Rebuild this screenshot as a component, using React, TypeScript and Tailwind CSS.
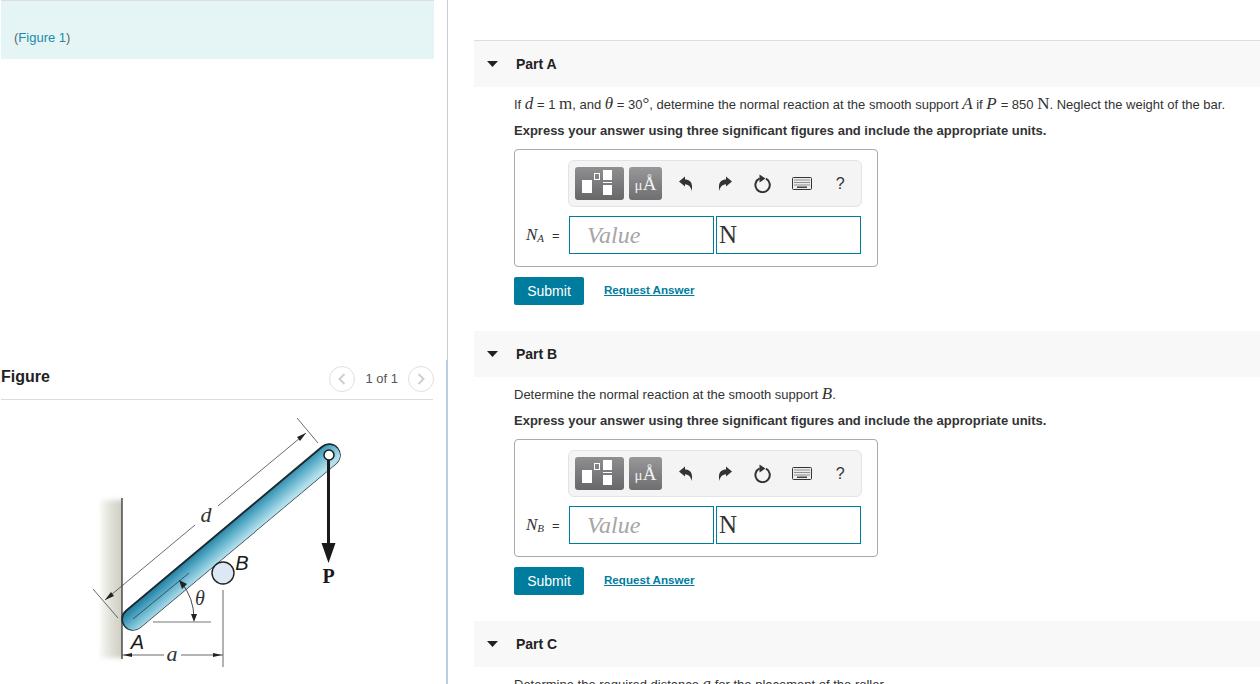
const BAR = "#1d2a30";

const Diagram = () => {
  return (
    <svg width="433" height="284" viewBox="0 0 433 284" className="block">
      <defs>
        <linearGradient id="wall" x1="0" y1="0" x2="1" y2="0">
          <stop offset="0" stopColor="#f4f4f0" />
          <stop offset="0.5" stopColor="#d6d5ca" />
          <stop offset="1" stopColor="#c4c3b6" />
        </linearGradient>
        <linearGradient id="bar" gradientUnits="userSpaceOnUse" x1="223" y1="129" x2="237" y2="145">
          <stop offset="0" stopColor="#2a86a8" />
          <stop offset="0.45" stopColor="#62b2cc" />
          <stop offset="1" stopColor="#b4dfec" />
        </linearGradient>
        <filter id="soft" x="-30%" y="-10%" width="160%" height="120%">
          <feGaussianBlur stdDeviation="2.5" />
        </filter>
        <clipPath id="wallClip">
          <rect x="90" y="90" width="31" height="180" />
        </clipPath>
      </defs>

      {/* wall */}
      <g clipPath="url(#wallClip)">
        <rect x="100" y="100" width="32" height="158" fill="url(#wall)" filter="url(#soft)" />
      </g>
      <line x1="121" y1="98" x2="121" y2="259" stroke="#333" strokeWidth="1.3" />

      {/* bar */}
      <line x1="132" y1="219" x2="328" y2="55" stroke={BAR} strokeWidth="23.5" strokeLinecap="round" />
      <line x1="132.5" y1="219.5" x2="328.5" y2="55.5" stroke="url(#bar)" strokeWidth="21" strokeLinecap="round" />
      <line x1="132" y1="219" x2="188" y2="173" stroke="#2a3c44" strokeWidth="0.8" />

      {/* force P */}
      <line x1="327.5" y1="60" x2="327.5" y2="145" stroke="#1a1a1a" strokeWidth="3" />
      <path d="M320.5 143 L334.5 143 L327.5 163 Z" fill="#1a1a1a" />
      <circle cx="328" cy="55" r="5" fill="#fff" stroke="#1a1a1a" strokeWidth="1.5" />
      <text x="327.5" y="183" textAnchor="middle" fontFamily="Liberation Serif" fontWeight="700" fontSize="20" fill="#1a1a1a">P</text>

      {/* dimension d */}
      <g stroke="#444" strokeWidth="0.8" fill="none">
        <line x1="104" y1="200" x2="194" y2="125" />
        <line x1="217" y1="106" x2="305" y2="33" />
        <line x1="296" y1="18" x2="317" y2="43" />
        <line x1="92" y1="189" x2="117" y2="218" />
      </g>
      <path d="M305 33 L296 37 L299 41 Z" fill="#222" />
      <path d="M104 200 L113 196 L110 192 Z" fill="#222" />
      <text x="205" y="122" textAnchor="middle" fontFamily="Liberation Serif" fontStyle="italic" fontSize="22" fill="#333">d</text>

      {/* roller */}
      <circle cx="222" cy="173" r="11" fill="#dce9f5" stroke="#222" strokeWidth="1.4" />
      <text x="241" y="170" textAnchor="middle" fontFamily="Liberation Sans" fontStyle="italic" fontSize="20" fill="#1a1a1a">B</text>

      {/* angle */}
      <path d="M180 182 Q193 198 193 219" fill="none" stroke="#333" strokeWidth="0.9" />
      <path d="M178 180 L186 184 L181 189 Z" fill="#222" />
      <path d="M193 222 L190 214 L196 214 Z" fill="#222" />
      <line x1="152" y1="222" x2="210" y2="222" stroke="#777" strokeWidth="1.2" />
      <text x="199" y="205" textAnchor="middle" fontFamily="Liberation Serif" fontStyle="italic" fontSize="20" fill="#333">θ</text>

      {/* dimension a */}
      <line x1="222" y1="190" x2="222" y2="267" stroke="#666" strokeWidth="1" />
      <line x1="121" y1="255" x2="163" y2="255" stroke="#444" strokeWidth="0.8" />
      <line x1="180" y1="255" x2="222" y2="255" stroke="#444" strokeWidth="0.8" />
      <path d="M122 255 L131 253 L131 257 Z" fill="#222" />
      <path d="M221 255 L212 253 L212 257 Z" fill="#222" />
      <text x="171" y="261" textAnchor="middle" fontFamily="Liberation Serif" fontStyle="italic" fontSize="22" fill="#333">a</text>
      <text x="136.5" y="249" textAnchor="middle" fontFamily="Liberation Sans" fontStyle="italic" fontSize="20" fill="#1a1a1a">A</text>
    </svg>
  );
};

const M = ({ children, italic }: { children: React.ReactNode; italic?: boolean }) => (
  <span className={`font-['Liberation_Serif',serif] text-[17px] leading-[1] text-[#333] ${italic ? "italic" : ""}`}>{children}</span>
);

const ToolIcon = ({ children }: { children: React.ReactNode }) => (
  <div className="w-[38.5px] flex items-center justify-center">{children}</div>
);

const AnswerBox = ({ sub }: { sub: string }) => {
  return (
    <div className="w-[364px] h-[118px] border border-[#aaaaaa] rounded-[4px] pt-[10px] bg-white">
      <div className="ml-[53px] w-[294px] h-[47px] bg-[#f4f4f4] border border-[#e3e3e3] rounded-[6px] flex items-center pl-[6px]">
        <div className="w-[49px] h-[33px] rounded-[3px] bg-gradient-to-b from-[#8f8f92] to-[#67676a]">
          <svg width="49" height="33" viewBox="0 0 49 33">
            <rect x="7" y="13" width="10" height="13" fill="#fff" />
            <rect x="19.5" y="6.5" width="5" height="6" fill="none" stroke="#fff" strokeWidth="1" />
            <rect x="28" y="3" width="9" height="10" fill="#fff" />
            <rect x="28" y="15" width="9" height="1" fill="#fff" />
            <rect x="28" y="18" width="9" height="10" fill="#fff" />
          </svg>
        </div>
        <div className="ml-[5px] w-[33px] h-[33px] rounded-[3px] bg-gradient-to-b from-[#98989b] to-[#6f6f72] flex items-baseline justify-center font-['Liberation_Serif',serif] text-[#f2f2f2] pt-[7px]">
          <span className="text-[15px] leading-[20px]">μ</span>
          <span className="text-[19px] leading-[20px]">Å</span>
        </div>
        <div className="ml-[5px] flex items-center">
          <ToolIcon>
            <svg width="14" height="15" viewBox="0 0 14 15">
              <path d="M0 5.5 L6 0.5 V3.4 C11 3.4 14.5 7 12.5 15 C12 11 10 8.5 6 8.2 V10.5 Z" fill="#333" />
            </svg>
          </ToolIcon>
          <ToolIcon>
            <svg width="14" height="15" viewBox="0 0 14 15">
              <path d="M14 5.5 L8 0.5 V3.4 C3 3.4 -0.5 7 1.5 15 C2 11 4 8.5 8 8.2 V10.5 Z" fill="#333" />
            </svg>
          </ToolIcon>
          <ToolIcon>
            <svg width="18" height="19" viewBox="0 0 18 19">
              <path d="M12 4.6 A7.2 7.2 0 1 1 5.6 4.4" fill="none" stroke="#333" strokeWidth="2" />
              <path d="M5.5 0.5 L11.5 4.5 L5.5 8.5 Z" fill="#333" />
            </svg>
          </ToolIcon>
          <ToolIcon>
            <svg width="20" height="13" viewBox="0 0 20 13">
              <rect x="0.5" y="0.5" width="19" height="12" rx="1" fill="#ececec" stroke="#333" />
              <path d="M2.5 3 H17.5 M2.5 5.5 H17.5 M2.5 8 H17.5" stroke="#333" strokeWidth="1" strokeDasharray="1 1" />
              <rect x="5" y="9.5" width="10" height="1.5" fill="#444" />
            </svg>
          </ToolIcon>
          <ToolIcon>
            <span className="text-[16px] text-[#333]">?</span>
          </ToolIcon>
        </div>
      </div>
      <div className="mt-[9px] flex items-center">
        <div className="w-[54px] pl-[11px] flex items-baseline text-[#333]">
          <span className="font-['Liberation_Serif',serif] italic text-[17px]">N</span>
          <span className="font-['Liberation_Serif',serif] italic text-[11px] translate-y-[2px]">{sub}</span>
          <span className="text-[13px] ml-[8px]">=</span>
        </div>
        <div className="w-[145px] h-[38px] border border-[#007c9e] flex items-center pl-[17px] font-['Liberation_Serif',serif] italic text-[24px] text-[#a6a6a6]">
          Value
        </div>
        <div className="ml-[2px] w-[145px] h-[38px] border border-[#007c9e] flex items-center pl-[2px] font-['Liberation_Serif',serif] text-[25px] text-[#333]">
          N
        </div>
      </div>
    </div>
  );
};

const PartHeader = ({ title }: { title: string }) => (
  <div className="h-[46px] bg-[#f8f8f8] flex items-center pl-[13px]">
    <svg width="11" height="6" viewBox="0 0 11 6">
      <path d="M0 0 H11 L5.5 6 Z" fill="#222" />
    </svg>
    <span className="ml-[18px] text-[14px] font-bold text-[#222]">{title}</span>
  </div>
);

const Part = ({ title, sub, children }: { title: string; sub: string; children: React.ReactNode }) => {
  return (
    <div className="h-[290px]">
      <PartHeader title={title} />
      <div className="pl-[40px]">
        <p className="mt-[8px] h-[20px] leading-[20px] text-[13px] text-[#333] whitespace-nowrap">{children}</p>
        <p className="mt-[6px] h-[20px] leading-[20px] text-[13px] font-bold text-[#333] whitespace-nowrap">
          Express your answer using three significant figures and include the appropriate units.
        </p>
        <div className="mt-[8px]">
          <AnswerBox sub={sub} />
        </div>
        <div className="mt-[10px] flex items-center">
          <button className="w-[70px] h-[28px] bg-[#007c9e] rounded-[2px] text-white text-[14px]">Submit</button>
          <a className="ml-[20px] -mt-[3px] text-[11.6px] font-bold text-[#007c9e] underline">Request Answer</a>
        </div>
      </div>
    </div>
  );
};

export default function App() {
  return (
    <div className="w-[1260px] h-[684px] overflow-hidden flex bg-white font-['Liberation_Sans',Arial,sans-serif]">
      <div className="w-[448px] shrink-0">
        <div className="h-[360px] border-r border-[#c9ccd1] pl-[1px] pr-[13px]">
          <div className="h-[59px] bg-[#e5f5f6] border-t border-[#dddddd] pl-[13px] pt-[29px] text-[13px] leading-[16px] text-[#666]">
            (<span className="text-[#1e8aa8]">Figure 1</span>)
          </div>
        </div>
        <div className="h-[324px] border-r-2 border-[#bccde2] pl-[1px] pr-[12px] pt-[4px]">
          <div className="h-[36px] flex items-center justify-between border-b border-[#d9dde3] mr-[1px]">
            <span className="text-[16px] font-bold text-[#222] -mt-[10px]">Figure</span>
            <div className="flex items-center -mt-[6px] -mr-[1px]">
              <div className="w-[26px] h-[26px] rounded-full border border-[#e0e0e0] flex items-center justify-center">
                <svg width="8" height="12" viewBox="0 0 8 12">
                  <path d="M6.5 1 L1.5 6 L6.5 11" fill="none" stroke="#cfcfcf" strokeWidth="2" />
                </svg>
              </div>
              <span className="mx-[10px] text-[13px] text-[#555]">1 of 1</span>
              <div className="w-[26px] h-[26px] rounded-full border border-[#e0e0e0] flex items-center justify-center">
                <svg width="8" height="12" viewBox="0 0 8 12">
                  <path d="M1.5 1 L6.5 6 L1.5 11" fill="none" stroke="#cfcfcf" strokeWidth="2" />
                </svg>
              </div>
            </div>
          </div>
          <Diagram />
        </div>
      </div>

      <div className="ml-[26px] flex-1 mt-[40px]">
        <div className="border-t border-[#dddddd]">
          <Part title="Part A" sub="A">
            If <M italic>d</M> = 1 <M>m</M>, and <M italic>θ</M> = 30<M>°</M>, determine the normal reaction at the smooth support <M italic>A</M> if <M italic>P</M><span className="ml-[4px]">=</span> 850 <M>N</M>. Neglect the weight of the bar.
          </Part>
          <Part title="Part B" sub="B">
            Determine the normal reaction at the smooth support <M italic>B</M>.
          </Part>
          <PartHeader title="Part C" />
          <p className="pl-[40px] mt-[8px] leading-[20px] text-[13px] text-[#333] whitespace-nowrap">
            Determine the required distance <M italic>a</M> for the placement of the roller.
          </p>
        </div>
      </div>
    </div>
  );
}
